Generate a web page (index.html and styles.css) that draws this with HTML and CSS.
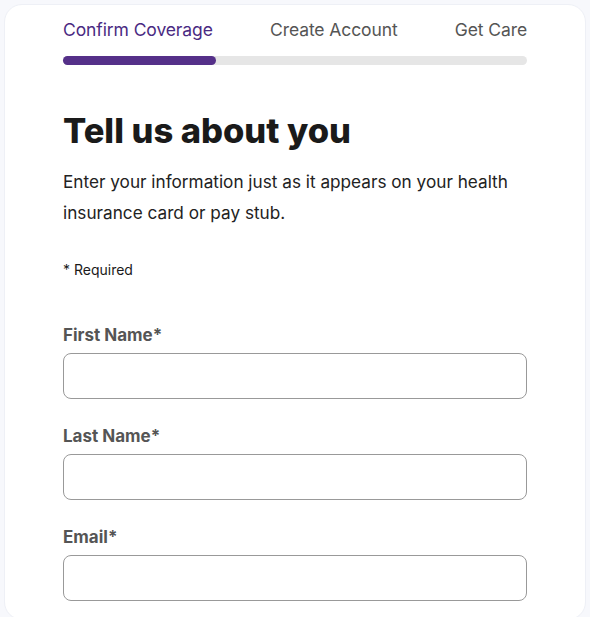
FILE: index.html
```html
<!DOCTYPE html>
<html lang="en">
<head>
    <meta charset="UTF-8">
    <meta name="viewport" content="width=device-width, initial-scale=1.0">
    <title>Tell us about you</title>
    <link rel="stylesheet" href="styles.css">
</head>
<body>
    <div class="card">
        <div class="steps">
            <span class="step active">Confirm Coverage</span>
            <span class="step">Create Account</span>
            <span class="step">Get Care</span>
        </div>
        <div class="progress">
            <div class="progress-fill"></div>
        </div>
        <h1>Tell us about you</h1>
        <p class="intro">Enter your information just as it appears on your health insurance card or pay stub.</p>
        <p class="required">* Required</p>
        <form class="form">
            <div class="field">
                <label for="firstName">First Name*</label>
                <input type="text" id="firstName" name="firstName">
            </div>
            <div class="field">
                <label for="lastName">Last Name*</label>
                <input type="text" id="lastName" name="lastName">
            </div>
            <div class="field">
                <label for="email">Email*</label>
                <input type="email" id="email" name="email">
            </div>
        </form>
    </div>
</body>
</html>
```

FILE: styles.css
```css
body {
    margin: 0;
    padding: 4px;
    font-family: Inter, "Noto Sans", sans-serif;
    background-color: #f7f8fc;
    color: #1a1a1a;
}
.card {
    background: #ffffff;
    border: 1px solid #eef0f6;
    border-radius: 18px;
    padding: 14px 58px 40px;
    height: 560px;
    overflow: hidden;
}
.steps {
    display: flex;
    justify-content: space-between;
    font-size: 17.5px;
    line-height: 22px;
    color: #555555;
    letter-spacing: -0.1px;
}
.step.active {
    color: #4a2a82;
}
.progress {
    margin-top: 15px;
    height: 9px;
    border-radius: 5px;
    background-color: #e6e6e6;
}
.progress-fill {
    width: 33%;
    height: 100%;
    border-radius: 5px;
    background-color: #553089;
}
h1 {
    margin: 44px 0 0;
    font-size: 34.5px;
    line-height: 44px;
    font-weight: 800;
    color: #1a1a1a;
}
.intro {
    margin: 13px 0 0;
    font-size: 17.2px;
    line-height: 31px;
    color: #222222;
}
.required {
    margin: 33px 0 0;
    font-size: 14px;
    line-height: 18px;
}
.form {
    margin-top: 46px;
}
.field {
    margin-bottom: 27px;
}
.field label {
    display: block;
    margin-bottom: 8px;
    font-size: 17px;
    line-height: 20px;
    font-weight: 700;
    color: #555555;
}
.field input {
    display: block;
    box-sizing: border-box;
    width: 100%;
    height: 46px;
    border: 1px solid #999999;
    border-radius: 8px;
    font-size: 16px;
    padding: 0 12px;
    background: #ffffff;
}
```
